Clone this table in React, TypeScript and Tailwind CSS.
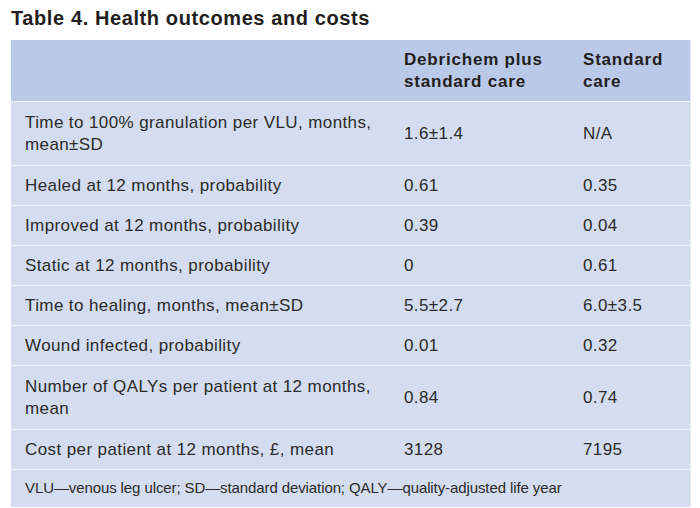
const rows: { label: string[]; a: string; b: string }[] = [
  { label: ['Time to 100% granulation per VLU, months,', 'mean±SD'], a: '1.6±1.4', b: 'N/A' },
  { label: ['Healed at 12 months, probability'], a: '0.61', b: '0.35' },
  { label: ['Improved at 12 months, probability'], a: '0.39', b: '0.04' },
  { label: ['Static at 12 months, probability'], a: '0', b: '0.61' },
  { label: ['Time to healing, months, mean±SD'], a: '5.5±2.7', b: '6.0±3.5' },
  { label: ['Wound infected, probability'], a: '0.01', b: '0.32' },
  { label: ['Number of QALYs per patient at 12 months,', 'mean'], a: '0.84', b: '0.74' },
  { label: ['Cost per patient at 12 months, £, mean'], a: '3128', b: '7195' },
];

export default function App() {
  return (
    <div className="w-[700px] h-[508px] bg-white overflow-hidden font-['Liberation_Sans',Arial,sans-serif]">
      {/* Title */}
      <h1 className="pl-[11px] pt-[6px] h-[40px] text-[20px] leading-[24px] tracking-[0.6px] font-bold text-[#231f20]">
        Table 4. Health outcomes and costs
      </h1>

      <div className="ml-[11px] w-[680px] border-r border-[#e6ebf5]">
        {/* Header */}
        <div className="grid grid-cols-[379px_179px_1fr] h-[61px] items-center bg-[#b9c9e7] text-[17px] leading-[22px] tracking-[0.8px] font-bold text-[#231f20]">
          <div className="pl-[14px]" />
          <div className="pl-[14px]">
            Debrichem plus
            <br />
            standard care
          </div>
          <div className="pl-[14px]">
            Standard
            <br />
            care
          </div>
        </div>

        {/* Body rows */}
        {rows.map((r, i) => (
          <div
            key={i}
            className={
              'grid grid-cols-[379px_179px_1fr] items-center bg-[#d3ddef] border-t border-[#eef2f9] text-[17px] leading-[22px] tracking-[0.4px] text-[#2b2b2b] ' +
              (r.label.length > 1 ? 'h-[64px]' : 'h-[40px]')
            }
          >
            <div className="pl-[14px]">
              {r.label.map((l, j) => (
                <div key={j}>{l}</div>
              ))}
            </div>
            <div className="pl-[14px]">{r.a}</div>
            <div className="pl-[14px]">{r.b}</div>
          </div>
        ))}

        {/* Footnote */}
        <div className="h-[38px] flex items-center bg-[#d3ddef] border-t border-[#eef2f9] pl-[14px] text-[15px] tracking-[-0.1px] text-[#2b2b2b]">
          VLU—venous leg ulcer; SD—standard deviation; QALY—quality-adjusted life year
        </div>
      </div>
    </div>
  );
}
